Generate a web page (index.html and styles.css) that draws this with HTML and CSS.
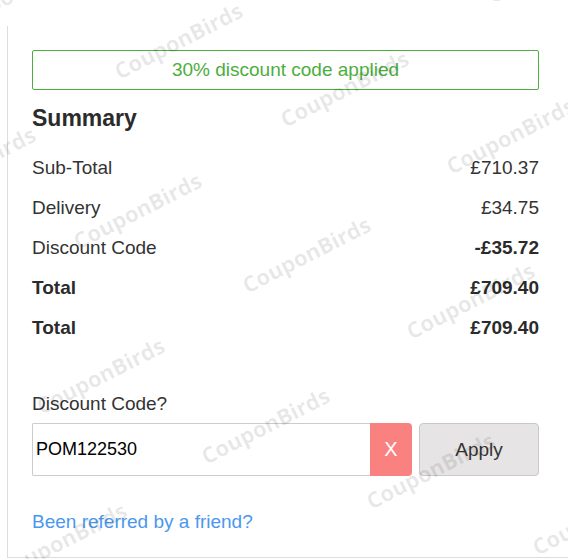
FILE: index.html
```html
<!DOCTYPE html>
<html lang="en">
<head>
<meta charset="utf-8">
<title>Summary</title>
<link rel="stylesheet" href="styles.css">
</head>
<body>
<div class="panel">
  <div class="alert">30% discount code applied</div>
  <h3 class="title">Summary</h3>
  <div class="row"><span>Sub-Total</span><span>£710.37</span></div>
  <div class="row"><span>Delivery</span><span>£34.75</span></div>
  <div class="row"><span>Discount Code</span><span class="bold">-£35.72</span></div>
  <div class="row bold"><span>Total</span><span>£709.40</span></div>
  <div class="row bold"><span>Total</span><span>£709.40</span></div>
  <label class="label" for="code">Discount Code?</label>
  <div class="group">
    <input id="code" class="input" type="text" value="POM122530">
    <button class="clear" type="button">X</button>
    <button class="apply" type="button">Apply</button>
  </div>
  <a class="link" href="#">Been referred by a friend?</a>
</div>
<div class="marks">
  <span class="wm w1">CouponBirds</span>
  <span class="wm w2">CouponBirds</span>
  <span class="wm w3">CouponBirds</span>
  <span class="wm w4">CouponBirds</span>
  <span class="wm w5">CouponBirds</span>
  <span class="wm w6">CouponBirds</span>
  <span class="wm w7">CouponBirds</span>
  <span class="wm w8">CouponBirds</span>
  <span class="wm w9">CouponBirds</span>
  <span class="wm w10">CouponBirds</span>
  <span class="wm w11">CouponBirds</span>
  <span class="wm w12">CouponBirds</span>
  <span class="wm w13">CouponBirds</span>
  <span class="wm w14">CouponBirds</span>
</div>
</body>
</html>
```

FILE: styles.css
```css
html, body {
  margin: 0;
  padding: 0;
  background: #fff;
}
body {
  font-family: "Liberation Sans", Arial, sans-serif;
  color: #333;
  font-size: 19px;
  overflow: hidden;
  height: 559px;
  position: relative;
}
.panel {
  margin: 26px 0 0 7px;
  border-left: 1px solid #ddd;
  border-bottom: 1px solid #ddd;
  padding: 24px 29px 24px 24px;
}
.alert {
  box-sizing: border-box;
  height: 40px;
  border: 1px solid #4bae3d;
  border-radius: 2px;
  color: #4bae3d;
  display: flex;
  align-items: center;
  justify-content: center;
  line-height: 22px;
}
.title {
  margin: 16px 0 17px;
  font-size: 23px;
  line-height: 25px;
  font-weight: bold;
  color: #2b2b2b;
}
.row {
  display: flex;
  justify-content: space-between;
  line-height: 20px;
  padding: 10px 0;
}
.bold {
  font-weight: bold;
  color: #2b2b2b;
}
.label {
  display: block;
  margin-top: 45px;
  margin-bottom: 8px;
  line-height: 22px;
}
.group {
  display: flex;
  height: 53px;
}
.input {
  flex: 1;
  min-width: 0;
  box-sizing: border-box;
  height: 53px;
  margin: 0;
  border: 1px solid #ccc;
  border-right: none;
  border-radius: 2px 0 0 2px;
  padding: 0 3px;
  font-family: "Liberation Sans", Arial, sans-serif;
  font-size: 18px;
  color: #000;
  outline: none;
}
.clear {
  width: 42px;
  height: 53px;
  margin: 0;
  border: none;
  border-radius: 0 4px 4px 0;
  background: #f98281;
  color: #fff;
  font-family: "Liberation Sans", Arial, sans-serif;
  font-size: 20px;
  padding: 0;
}
.apply {
  width: 120px;
  height: 53px;
  margin: 0 0 0 7px;
  box-sizing: border-box;
  border: 1px solid #c9c9c9;
  border-radius: 4px;
  background: #e6e4e4;
  color: #333;
  font-family: "Liberation Sans", Arial, sans-serif;
  font-size: 19px;
  padding: 0;
}
.link {
  display: block;
  margin-top: 35px;
  line-height: 22px;
  color: #4a98ee;
  text-decoration: none;
}
.marks {
  position: absolute;
  inset: 0;
  overflow: hidden;
  pointer-events: none;
}
.wm {
  position: absolute;
  font-family: "Open Sans", "DejaVu Sans", sans-serif;
  font-weight: 700;
  font-size: 22px;
  line-height: 26px;
  color: rgba(0, 0, 0, 0.09);
  white-space: nowrap;
  transform: translate(-50%, -50%) rotate(-27deg);
}
.w1 { left: 12px; top: -7px; }
.w2 { left: 178px; top: 40px; }
.w3 { left: 344px; top: 88px; }
.w4 { left: 510px; top: 135px; }
.w5 { left: -29px; top: 164px; }
.w6 { left: 137px; top: 210px; }
.w7 { left: 306px; top: 254px; }
.w8 { left: 470px; top: 300px; }
.w9 { left: 100px; top: 375px; }
.w10 { left: 265px; top: 425px; }
.w11 { left: 430px; top: 470px; }
.w12 { left: 596px; top: 516px; }
.w13 { left: 62px; top: 540px; }
.w14 { left: 551px; top: -36px; }
```
